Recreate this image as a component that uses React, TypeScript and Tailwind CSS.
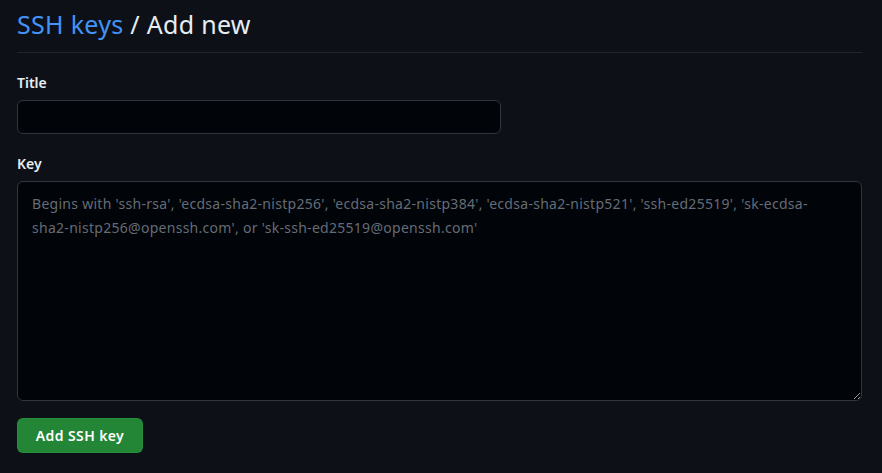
import React, { useState } from 'react';

const font = { fontFamily: '"Noto Sans", "Liberation Sans", sans-serif' };

const App: React.FC = () => {
  const [title, setTitle] = useState('');
  const [key, setKey] = useState('');

  return (
    <div
      className="min-h-[473px] w-full bg-[#0d1117] px-[17px] text-[#e6edf3] [color-scheme:dark]"
      style={font}
    >
      <div className="w-[845px]">
        <div className="border-b border-[#21262d] pt-[9px] pb-[13px]">
          <h1 className="text-[25px] leading-[30px] font-normal tracking-[0.3px]">
            <a href="#" className="text-[#4493f8]">SSH keys</a>
            <span> / Add new</span>
          </h1>
        </div>

        <form onSubmit={(e) => e.preventDefault()}>
          <div className="mt-[20px]">
            <label htmlFor="title" className="block text-[14px] leading-[20px] font-semibold">
              Title
            </label>
            <input
              id="title"
              value={title}
              onChange={(e) => setTitle(e.target.value)}
              className="mt-[7px] block h-[34px] w-[484px] rounded-md border border-[#30363d] bg-[#010409] px-3 text-[14px] text-[#e6edf3] outline-none focus:border-[#1f6feb]"
            />
          </div>

          <div className="mt-[20px]">
            <label htmlFor="key" className="block text-[14px] leading-[20px] font-semibold">
              Key
            </label>
            <textarea
              id="key"
              value={key}
              onChange={(e) => setKey(e.target.value)}
              placeholder="Begins with 'ssh-rsa', 'ecdsa-sha2-nistp256', 'ecdsa-sha2-nistp384', 'ecdsa-sha2-nistp521', 'ssh-ed25519', 'sk-ecdsa-sha2-nistp256@openssh.com', or 'sk-ssh-ed25519@openssh.com'"
              className="mt-[7px] block h-[220px] w-[845px] rounded-md border border-[#30363d] bg-[#010409] pt-[10px] pl-[14px] pr-[24px] text-[14px] leading-[23.5px] tracking-[0.28px] text-[#e6edf3] outline-none placeholder:text-[#656c76] focus:border-[#1f6feb]"
            />
          </div>

          <button
            type="submit"
            className="mt-[17px] h-[35px] w-[126px] rounded-md border border-[#2ea04366] bg-[#238636] text-[14px] font-semibold tracking-[0.4px] text-white hover:bg-[#2ea043]"
          >
            Add SSH key
          </button>
        </form>
      </div>
    </div>
  );
};

export default App;
